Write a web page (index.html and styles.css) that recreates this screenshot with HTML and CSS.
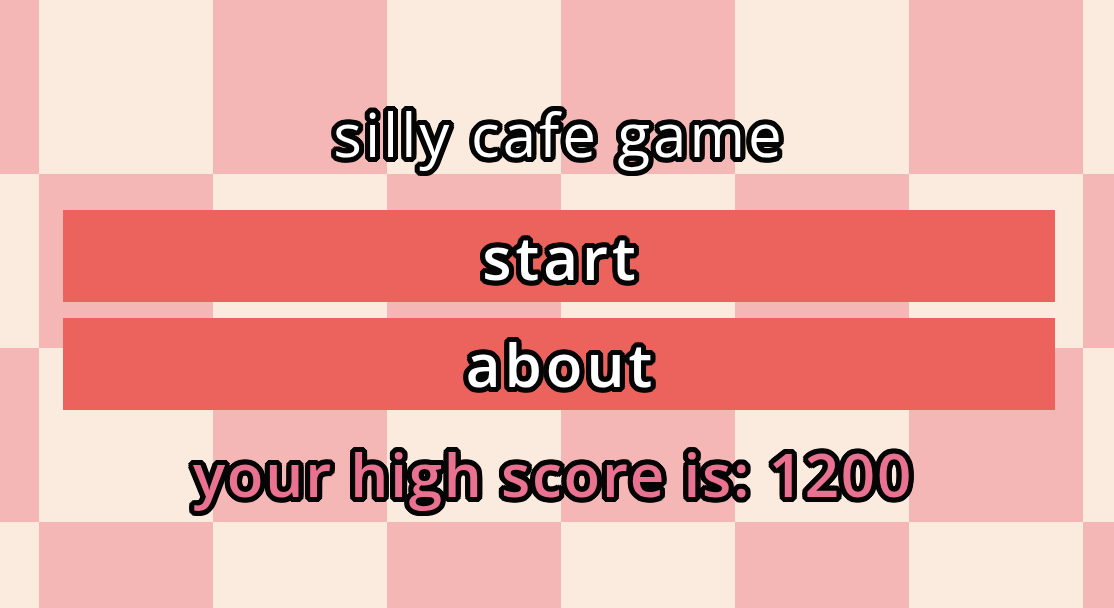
FILE: index.html
```html
<!DOCTYPE html>
<html>
<head>
    <title>silly cafe game</title>
    <link rel="stylesheet" href="styles.css">
</head>
<body>
    <div id="menu">
        <h1 class="title">silly cafe game</h1>

        <!-- main menu buttons -->
        <div class="buttons">
            <button class="menu-btn">start</button>
            <button class="menu-btn">about</button>
        </div>

        <p class="score">your high score is: <span id="highScore">1200</span></p>
    </div>
</body>
</html>
```

FILE: styles.css
```css
/* cafe tablecloth colours */
:root {
    --check-pink: #f5b6b6;
    --check-cream: #faebde;
    --button-red: #ec635d;
    --score-pink: #e8728f;
    --outline: #050505;
}

body {
    margin: 0;
    height: 608px;
    overflow: hidden;
    font-family: "Open Sans", "Noto Sans", sans-serif;
    background-color: var(--check-cream);
    background-image: repeating-conic-gradient(var(--check-cream) 0 25%, var(--check-pink) 0 50%);
    background-size: 348px 348px;
    background-position: -135px 0;
}

#menu {
    display: flex;
    flex-direction: column;
    align-items: center;
    padding: 99px 59px 0 63px;
}

/* chunky black outline around all the menu text */
.title,
.menu-btn,
.score {
    font-size: 60px;
    font-weight: 600;
    line-height: 70px;
    text-shadow:
        5px 0 0 var(--outline), -5px 0 0 var(--outline),
        0 5px 0 var(--outline), 0 -5px 0 var(--outline),
        4px 3px 0 var(--outline), -4px 3px 0 var(--outline),
        4px -3px 0 var(--outline), -4px -3px 0 var(--outline),
        3px 4px 0 var(--outline), -3px 4px 0 var(--outline),
        3px -4px 0 var(--outline), -3px -4px 0 var(--outline),
        5px 2px 0 var(--outline), -5px 2px 0 var(--outline),
        5px -2px 0 var(--outline), -5px -2px 0 var(--outline),
        2px 5px 0 var(--outline), -2px 5px 0 var(--outline),
        2px -5px 0 var(--outline), -2px -5px 0 var(--outline),
        0 0 2px var(--outline);
}

.title {
    margin: 0;
    color: #ffffff;
    font-weight: 500;
    letter-spacing: 3px;
}

.buttons {
    display: flex;
    flex-direction: column;
    gap: 16px;
    width: 100%;
    margin-top: 41px;
}

.menu-btn {
    height: 92px;
    padding: 2px 0 0 4px;
    border: none;
    border-radius: 0;
    background-color: var(--button-red);
    color: #ffffff;
    font-family: inherit;
    letter-spacing: 4px;
    cursor: pointer;
}

.menu-btn + .menu-btn {
    padding-top: 0;
}

.score {
    margin: 29px 12px 0 0;
    color: var(--score-pink);
    letter-spacing: 1.8px;
}
```
